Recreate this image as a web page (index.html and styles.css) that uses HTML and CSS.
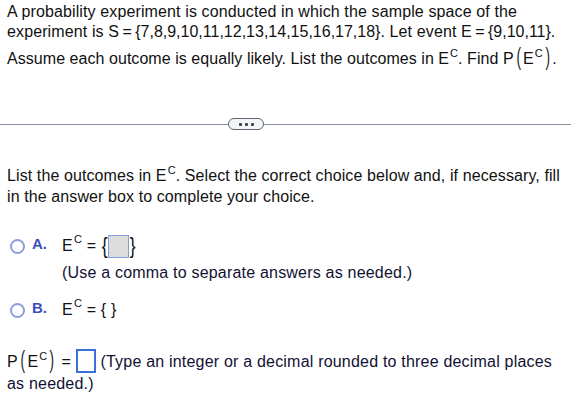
FILE: index.html
```html
<!DOCTYPE html>
<html>
<head>
<meta charset="utf-8">
<link rel="stylesheet" href="styles.css">
</head>
<body>
<div class="page">
  <p class="question">
    <span class="q-line">A probability experiment is conducted in which the sample space of the</span>
    <span class="q-line">experiment is S&#8201;=&#8201;<span class="set">{7,8,9,10,11,12,13,14,15,16,17,18}</span>. Let event E&#8201;=&#8201;<span class="set">{9,10,11}</span>.</span>
    <span class="q-line q-line-last">Assume each outcome is equally likely. List the outcomes in E<sup class="sup">C</sup>. Find P<span class="paren">(</span>E<sup class="sup">C</sup><span class="paren">)</span>.</span>
  </p>

  <div class="divider">
    <span class="rule rule-left"></span>
    <span class="pill"><i></i><i></i><i></i></span>
    <span class="rule"></span>
  </div>

  <p class="prompt">List the outcomes in E<sup class="sup">C</sup>. Select the correct choice below and, if necessary, fill<br>in the answer box to complete your choice.</p>

  <div class="choice choice-a">
    <span class="radio"></span>
    <span class="letter">A.</span>
    <div class="choice-body">
      <div class="expr">E<sup class="sup">C</sup> = <span class="brace">{</span><span class="box-gray"></span><span class="brace">}</span></div>
      <div class="hint hint-a">(Use a comma to separate answers as needed.)</div>
    </div>
  </div>

  <div class="choice choice-b">
    <span class="radio"></span>
    <span class="letter">B.</span>
    <div class="choice-body">
      <div class="expr">E<sup class="sup">C</sup> = { }</div>
    </div>
  </div>

  <p class="answer">P<span class="paren">(</span>E<sup class="sup">C</sup><span class="paren">)</span> = <span class="box-blue"></span> <span class="hint">(Type an integer or a decimal rounded to three decimal places<br>as needed.)</span></p>
</div>
</body>
</html>
```

FILE: styles.css
```css
html, body {
  margin: 0;
  padding: 0;
  background: #ffffff;
}

body {
  font-family: "Liberation Sans", Arial, sans-serif;
  font-size: 16px;
  letter-spacing: 0.2px;
  color: #111111;
}

.page {
  padding: 0 0 0 7px;
}

p {
  margin: 0;
}

.question {
  padding-top: 2px;
  letter-spacing: 0.12px;
}

.q-line {
  display: block;
  line-height: 20px;
  white-space: nowrap;
}

.q-line-last {
  padding-top: 7px;
  letter-spacing: 0.05px;
}

.set {
  letter-spacing: 0;
}

.sup {
  font-size: 11px;
  vertical-align: 0;
  position: relative;
  top: -7px;
  line-height: 0;
  margin-left: 1px;
}

.paren {
  display: inline-block;
  font-weight: 300;
  line-height: 16px;
  transform: scale(0.85, 1.45) translateY(-1px);
  margin: 0 2px;
  color: #222222;
}

.divider {
  display: flex;
  align-items: center;
  margin: 49px 0 0 -7px;
}

.rule {
  flex: 1;
  height: 1px;
  background: #8790a0;
}

.rule-left {
  flex: none;
  width: 228px;
}

.pill {
  width: 34px;
  height: 10px;
  border: 1px solid #5d6472;
  border-radius: 6px;
  background: #f4f5f7;
  display: flex;
  align-items: center;
  justify-content: center;
  gap: 3px;
}

.pill i {
  width: 3px;
  height: 3px;
  background: #3e4450;
  border-radius: 1px;
}

.prompt {
  margin-top: 35px;
  line-height: 21px;
  letter-spacing: 0.1px;
}

.choice {
  display: flex;
  align-items: flex-start;
}

.choice-a {
  margin-top: 28px;
}

.choice-b {
  margin-top: 16px;
}

.radio {
  width: 11px;
  height: 11px;
  border: 2px solid #8c9fdc;
  border-radius: 50%;
  margin: 4px 0 0 3px;
  flex: none;
}

.letter {
  font-weight: bold;
  color: #3a4fb7;
  font-size: 15px;
  letter-spacing: 0;
  margin-left: 7px;
  width: 30px;
  line-height: 18px;
}

.choice-body {
  margin-top: -2px;
}

.expr {
  line-height: 26px;
  display: flex;
  align-items: center;
  white-space: pre;
}

.brace {
  font-size: 22px;
  transform: scaleX(0.8);
  display: inline-block;
}

.box-gray {
  display: inline-block;
  width: 21px;
  height: 23px;
  background: #dcdcdc;
  border: 1px solid #7fa1da;
  box-sizing: border-box;
}

.hint {
  line-height: 21px;
  color: #111133;
}

.hint-a {
  margin-top: 3px;
}

.answer {
  margin-top: 26px;
  line-height: 22px;
}

.box-blue {
  display: inline-block;
  width: 20px;
  height: 24px;
  border: 2px solid #3a6fd8;
  box-sizing: border-box;
  vertical-align: -6px;
}
```
